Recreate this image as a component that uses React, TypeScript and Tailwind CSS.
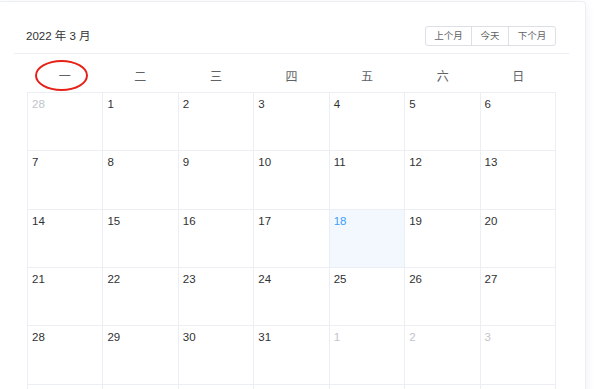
import React from "react";

type Day = { n: number; kind: "prev" | "cur" | "next" };

const weekdays = ["一", "二", "三", "四", "五", "六", "日"];

function buildDays(): Day[] {
    const days: Day[] = [{ n: 28, kind: "prev" }];
    for (let i = 1; i <= 31; i++) days.push({ n: i, kind: "cur" });
    for (let i = 1; i <= 10; i++) days.push({ n: i, kind: "next" });
    return days;
}

export default function App() {
    const days = buildDays();

    return (
        <div
            className="relative h-[389px] w-[600px] overflow-hidden bg-white"
            style={{ fontFamily: '"Liberation Sans", "Noto Sans CJK SC", sans-serif' }}
        >
            <div className="ml-[-3px] mt-[1px] w-[589px] rounded border border-[#ebeef5] bg-white px-4 pt-4 shadow-[0_2px_12px_rgba(0,0,0,0.06)]">
                <div className="flex items-center justify-between border-b border-[#ebeef5] pl-[12px] pr-[13px] pt-[8px] pb-[7px]">
                    <span className="pt-[2px] text-[11.5px] text-[#303133]">2022 年 3 月</span>
                    <div className="flex h-[20px] overflow-hidden rounded-[3px] border border-[#dcdfe6] text-[9.5px] text-[#606266]">
                        <button type="button" className="w-[46px] border-r border-[#dcdfe6]">上个月</button>
                        <button type="button" className="w-[37px] border-r border-[#dcdfe6]">今天</button>
                        <button type="button" className="w-[46px]">下个月</button>
                    </div>
                </div>

                <div className="px-[13px]">
                    <div className="grid grid-cols-7">
                        {weekdays.map((w) => (
                            <div key={w} className="flex h-[38px] items-end justify-center pb-[7px] text-[12px] leading-[16px] text-[#606266]">
                                {w}
                            </div>
                        ))}
                    </div>
                    <div className="grid auto-rows-[58.33px] grid-cols-7 border-l border-t border-[#ebeef5]">
                        {days.map((d, i) => {
                            const today = d.kind === "cur" && d.n === 18;
                            return (
                                <div
                                    key={i}
                                    className={
                                        today
                                            ? "border-b border-r border-[#ebeef5] bg-[#f2f8fe] px-[4px] pt-[4px] text-[11.5px] leading-[14px] text-[#409eff]"
                                            : d.kind === "cur"
                                              ? "border-b border-r border-[#ebeef5] px-[4px] pt-[4px] text-[11.5px] leading-[14px] text-[#303133]"
                                              : "border-b border-r border-[#ebeef5] px-[4px] pt-[4px] text-[11.5px] leading-[14px] text-[#c0c4cc]"
                                    }
                                >
                                    {d.n}
                                </div>
                            );
                        })}
                    </div>
                </div>
            </div>

            {/* annotation circle */}
            <div className="absolute left-[35px] top-[60px] h-[31px] w-[53px] rounded-[50%] border-2 border-[#e62117]" />
        </div>
    );
}
